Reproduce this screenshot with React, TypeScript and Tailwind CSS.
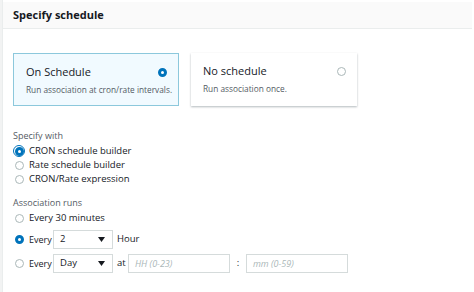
import React from "react";

const font = { fontFamily: '"Open Sans", "Liberation Sans", sans-serif' };

function Radio({ checked, focus }: { checked?: boolean; focus?: boolean }) {
  if (checked) {
    return (
      <span
        className={
          "flex items-center justify-center rounded-full w-[12px] h-[12px] " +
          (focus ? "border border-[#0073bb]" : "")
        }
      >
        <span className="block w-[9px] h-[9px] rounded-full border-[3px] border-[#0073bb] bg-white" />
      </span>
    );
  }
  return (
    <span className="flex items-center justify-center w-[12px] h-[12px]">
      <span className="block w-[9px] h-[9px] rounded-full border border-[#aab7b8] bg-white" />
    </span>
  );
}

function Select({ value }: { value: string }) {
  return (
    <div className="w-[60px] h-[19px] border border-[#d5dbdb] bg-white flex items-center justify-between pl-[6px] pr-[7px] text-[9.5px] text-[#16191f]">
      <span>{value}</span>
      <svg width="7" height="5" viewBox="0 0 7 5">
        <path d="M0 0 L7 0 L3.5 5 Z" fill="#16191f" />
      </svg>
    </div>
  );
}

function Input({ placeholder }: { placeholder: string }) {
  return (
    <div className="w-[102px] h-[19px] border border-[#d5dbdb] bg-white flex items-center pl-[6px] text-[9px] italic text-[#aab7b8]">
      {placeholder}
    </div>
  );
}

export default function App() {
  return (
    <div className="w-[474px] h-[292px] bg-white flex overflow-hidden" style={font}>
      <div className="w-[3px] h-full bg-[#f2f3f3] border-r border-[#eaeded]" />
      <div className="flex-1 flex flex-col">
        <div className="mt-[2px] mr-[2px] h-[27px] bg-[#fafafa] border-b border-[#eaeded] flex items-center pl-[10px]">
          <span className="text-[11px] font-bold text-[#16191f]">Specify schedule</span>
        </div>
        <div className="pl-[10px] pt-[24px]">
          <div className="flex gap-[12px]">
            <div className="w-[166px] h-[53px] bg-[#f1faff] border border-[#8cc8dc] pl-[12px] pr-[10px] pt-[10px]">
              <div className="flex items-center justify-between">
                <span className="text-[11px] text-[#16191f]">On Schedule</span>
                <Radio checked />
              </div>
              <div className="mt-[3px] text-[8.3px] text-[#545b64] whitespace-nowrap">
                Run association at cron/rate intervals.
              </div>
            </div>
            <div className="w-[166px] h-[53px] bg-white shadow-[0_1px_2px_rgba(0,28,36,0.3)] pl-[12px] pr-[10px] pt-[10px]">
              <div className="flex items-center justify-between">
                <span className="text-[11px] text-[#16191f]">No schedule</span>
                <Radio />
              </div>
              <div className="mt-[3px] text-[8.3px] text-[#545b64] whitespace-nowrap">
                Run association once.
              </div>
            </div>
          </div>

          <div className="mt-[23px] text-[9px] text-[#545b64]">Specify with</div>
          <div className="mt-[2px] flex flex-col gap-[1px] text-[9.5px] text-[#16191f]">
            <div className="flex items-center gap-[4px] h-[13px]">
              <Radio checked focus />
              <span>CRON schedule builder</span>
            </div>
            <div className="flex items-center gap-[4px] h-[13px]">
              <Radio />
              <span>Rate schedule builder</span>
            </div>
            <div className="flex items-center gap-[4px] h-[13px]">
              <Radio />
              <span>CRON/Rate expression</span>
            </div>
          </div>

          <div className="mt-[10px] text-[9px] text-[#545b64]">Association runs</div>
          <div className="mt-[2px] flex flex-col text-[9.5px] text-[#16191f]">
            <div className="flex items-center gap-[4px] h-[14px]">
              <Radio />
              <span>Every 30 minutes</span>
            </div>
            <div className="mt-[5px] flex items-center h-[19px]">
              <Radio checked />
              <span className="ml-[4px] w-[24px] whitespace-nowrap text-[9px]">Every</span>
              <Select value="2" />
              <span className="ml-[4px]">Hour</span>
            </div>
            <div className="mt-[5px] flex items-center h-[19px]">
              <Radio />
              <span className="ml-[4px] w-[24px] whitespace-nowrap text-[9px]">Every</span>
              <Select value="Day" />
              <span className="ml-[4px] w-[11px]">at</span>
              <Input placeholder="HH (0-23)" />
              <span className="w-[16px] text-center">:</span>
              <Input placeholder="mm (0-59)" />
            </div>
          </div>
        </div>
      </div>
    </div>
  );
}
